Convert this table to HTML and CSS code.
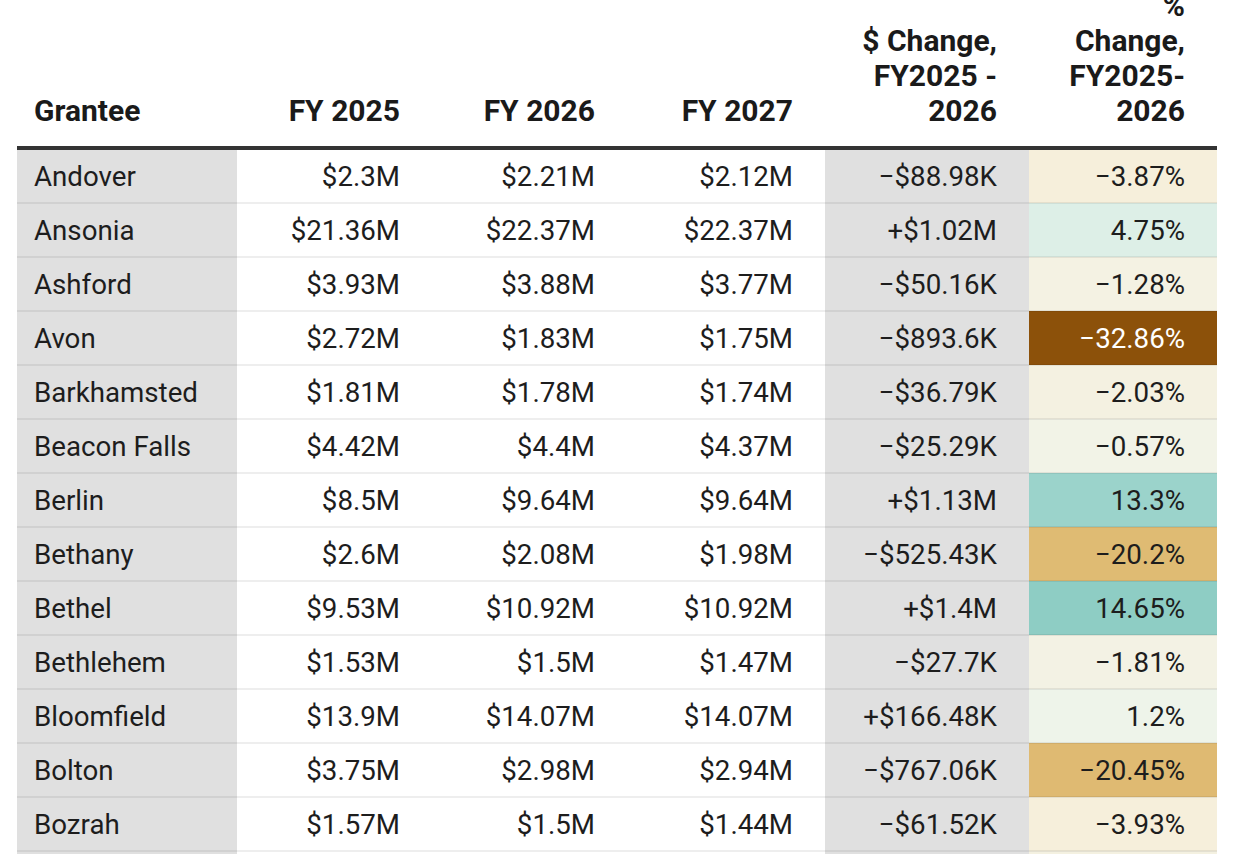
FILE: index.html
```html
<!DOCTYPE html>
<html lang="en">
<head>
<meta charset="utf-8">
<title>Grantee funding</title>
<link rel="stylesheet" href="styles.css">
</head>
<body>
<div class="wrap">
<table class="grid">
<colgroup>
<col class="c-name"><col class="c-fy"><col class="c-fy"><col class="c-fy27"><col class="c-chg"><col class="c-pct">
</colgroup>
<thead>
<tr>
<th class="name">Grantee</th>
<th>FY 2025</th>
<th>FY 2026</th>
<th>FY 2027</th>
<th>$ Change, FY2025 - 2026</th>
<th class="pcth">% Change, FY2025-2026</th>
</tr>
</thead>
<tbody>
<tr><td class="name">Andover</td><td>$2.3M</td><td>$2.21M</td><td>$2.12M</td><td class="chg">−$88.98K</td><td class="pct" style="background:#f6efdb">−3.87%</td></tr>
<tr><td class="name">Ansonia</td><td>$21.36M</td><td>$22.37M</td><td>$22.37M</td><td class="chg">+$1.02M</td><td class="pct" style="background:#ddefe7">4.75%</td></tr>
<tr><td class="name">Ashford</td><td>$3.93M</td><td>$3.88M</td><td>$3.77M</td><td class="chg">−$50.16K</td><td class="pct" style="background:#f4f2e3">−1.28%</td></tr>
<tr><td class="name">Avon</td><td>$2.72M</td><td>$1.83M</td><td>$1.75M</td><td class="chg">−$893.6K</td><td class="pct dark" style="background:#8c510a">−32.86%</td></tr>
<tr><td class="name">Barkhamsted</td><td>$1.81M</td><td>$1.78M</td><td>$1.74M</td><td class="chg">−$36.79K</td><td class="pct" style="background:#f4f1e1">−2.03%</td></tr>
<tr><td class="name">Beacon Falls</td><td>$4.42M</td><td>$4.4M</td><td>$4.37M</td><td class="chg">−$25.29K</td><td class="pct" style="background:#f2f3e7">−0.57%</td></tr>
<tr><td class="name">Berlin</td><td>$8.5M</td><td>$9.64M</td><td>$9.64M</td><td class="chg">+$1.13M</td><td class="pct" style="background:#9bd3cb">13.3%</td></tr>
<tr><td class="name">Bethany</td><td>$2.6M</td><td>$2.08M</td><td>$1.98M</td><td class="chg">−$525.43K</td><td class="pct" style="background:#dfbb73">−20.2%</td></tr>
<tr><td class="name">Bethel</td><td>$9.53M</td><td>$10.92M</td><td>$10.92M</td><td class="chg">+$1.4M</td><td class="pct" style="background:#8ecdc4">14.65%</td></tr>
<tr><td class="name">Bethlehem</td><td>$1.53M</td><td>$1.5M</td><td>$1.47M</td><td class="chg">−$27.7K</td><td class="pct" style="background:#f3f2e4">−1.81%</td></tr>
<tr><td class="name">Bloomfield</td><td>$13.9M</td><td>$14.07M</td><td>$14.07M</td><td class="chg">+$166.48K</td><td class="pct" style="background:#eef4ea">1.2%</td></tr>
<tr><td class="name">Bolton</td><td>$3.75M</td><td>$2.98M</td><td>$2.94M</td><td class="chg">−$767.06K</td><td class="pct" style="background:#dfba72">−20.45%</td></tr>
<tr><td class="name">Bozrah</td><td>$1.57M</td><td>$1.5M</td><td>$1.44M</td><td class="chg">−$61.52K</td><td class="pct" style="background:#f6efdb">−3.93%</td></tr>
<tr><td class="name">Branford</td><td>$7.12M</td><td>$7.05M</td><td>$6.98M</td><td class="chg">−$70.4K</td><td class="pct" style="background:#f4f1e1">−0.99%</td></tr>
</tbody>
</table>
</div>
</body>
</html>
```

FILE: styles.css
```css
html, body {
  margin: 0;
  padding: 0;
  background: #ffffff;
}

body {
  font-family: Roboto, "Liberation Sans", Arial, sans-serif;
  color: #1d1d1d;
  overflow: hidden;
}

.wrap {
  padding-left: 17px;
  margin-top: -12px;
}

.grid {
  border-collapse: collapse;
  table-layout: fixed;
  width: 1200px;
}

.c-name { width: 220px; }
.c-fy { width: 195px; }
.c-fy27 { width: 198px; }
.c-chg { width: 204px; }
.c-pct { width: 188px; }

.grid th {
  font-size: 30px;
  font-weight: 700;
  line-height: 35px;
  text-align: right;
  vertical-align: bottom;
  padding: 0 32px 18px 20px;
  border-bottom: 4px solid #333333;
  color: #1a1a1a;
}

.grid th.name {
  text-align: left;
  padding-left: 17px;
}

.grid td {
  font-size: 27.7px;
  font-weight: 400;
  height: 52px;
  padding: 0 32px 0 0;
  text-align: right;
  vertical-align: middle;
  border-bottom: 2px solid rgba(0, 0, 0, 0.065);
  white-space: nowrap;
  color: #1d1d1d;
}

.grid td.name {
  text-align: left;
  padding-left: 17px;
  background: #e0e0e0;
}

.grid td.chg {
  background: #e0e0e0;
}

.grid td.pct.dark {
  color: #ffffff;
}
```
